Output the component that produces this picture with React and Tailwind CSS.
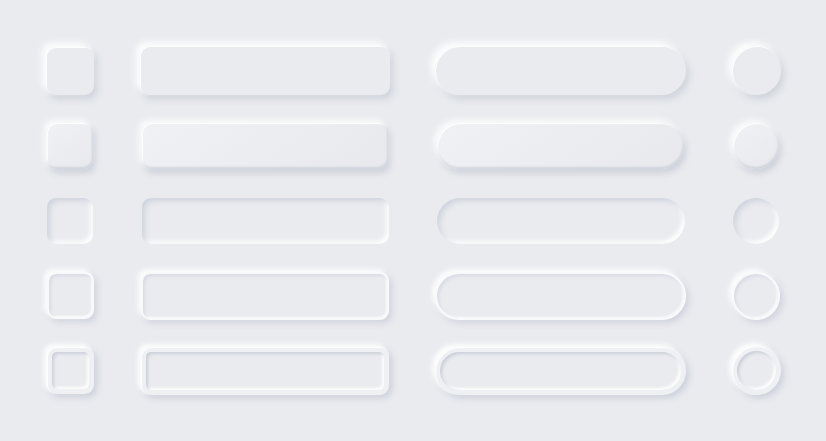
import React from "react";

// Neumorphic control set: each row repeats one surface treatment
// across a square, a bar, a pill and a circle.
const rows = [
  {
    size: "h-[49px]",
    square: "w-[48px] h-[48px]",
    bar: "w-[250px]",
    pill: "w-[251px]",
    circle: "w-[49px] h-[49px]",
    surface:
      "bg-[#e9ebef] shadow-[-4px_-4px_7px_rgba(255,255,255,0.95),3px_4px_7px_rgba(168,174,188,0.4),inset_1px_1px_0_rgba(255,255,255,0.9)]",
  },
  {
    size: "h-[46px]",
    square: "w-[46px] h-[46px]",
    bar: "w-[246px]",
    pill: "w-[247px]",
    circle: "w-[46px] h-[46px]",
    surface:
      "bg-[linear-gradient(145deg,#f0f1f4,#e7e9ed)] shadow-[-3px_-3px_6px_rgba(255,255,255,0.9),2px_4px_6px_rgba(160,166,182,0.4),inset_-1px_-2px_2px_rgba(190,195,206,0.55),inset_1px_1px_1px_rgba(255,255,255,1)]",
  },
  {
    size: "h-[46px]",
    square: "w-[46px] h-[46px]",
    bar: "w-[247px]",
    pill: "w-[248px]",
    circle: "w-[46px] h-[46px]",
    surface:
      "bg-[#e9ebef] shadow-[inset_3px_3px_5px_rgba(175,181,195,0.42),inset_-3px_-3px_4px_rgba(255,255,255,0.95)]",
  },
  {
    size: "h-[48px]",
    square: "w-[47px] h-[47px]",
    bar: "w-[248px]",
    pill: "w-[251px]",
    circle: "w-[48px] h-[48px]",
    surface:
      "bg-[#e9ebef] border-2 border-[#f8f9fb] shadow-[-3px_-3px_5px_rgba(255,255,255,0.9),3px_3px_6px_rgba(168,174,188,0.38),inset_2px_2px_3px_rgba(180,186,198,0.3),inset_-1px_-1px_2px_rgba(255,255,255,0.9)]",
  },
  {
    size: "h-[48px]",
    square: "w-[47px] h-[47px]",
    bar: "w-[248px]",
    pill: "w-[251px]",
    circle: "w-[49px] h-[49px]",
    ring: true,
    surface:
      "bg-[#eef0f3] p-[5px] shadow-[-3px_-3px_5px_rgba(255,255,255,0.95),3px_3px_6px_rgba(165,171,186,0.42),inset_1px_1px_1px_rgba(255,255,255,1)]",
    inner:
      "bg-[#e9ebef] shadow-[inset_2px_2px_3px_rgba(170,176,190,0.45),inset_-2px_-2px_3px_rgba(255,255,255,0.95)]",
  },
];

function Shape({ row, dims, radius, innerRadius }) {
  if (row.ring) {
    return (
      <div className={`${dims} ${radius} ${row.surface} flex`}>
        <div className={`flex-1 ${innerRadius} ${row.inner}`} />
      </div>
    );
  }
  return <div className={`${dims} ${radius} ${row.surface}`} />;
}

export default function App() {
  return (
    <div className="w-[826px] h-[441px] bg-[#e9ebef] overflow-hidden pl-[45px] pt-[33px]">
      <div className="grid grid-cols-[50px_250px_251px_50px] gap-x-[45px]">
        {rows.map((row, i) => (
          <React.Fragment key={i}>
            <div className="h-[75px] flex items-center justify-center">
              <Shape row={row} dims={row.square} radius="rounded-[9px]" innerRadius="rounded-[5px]" />
            </div>
            <div className="h-[75px] flex items-center justify-center">
              <Shape row={row} dims={`${row.bar} ${row.size}`} radius="rounded-[9px]" innerRadius="rounded-[5px]" />
            </div>
            <div className="h-[75px] flex items-center justify-center">
              <Shape row={row} dims={`${row.pill} ${row.size}`} radius="rounded-full" innerRadius="rounded-full" />
            </div>
            <div className="h-[75px] flex items-center justify-center">
              <Shape row={row} dims={row.circle} radius="rounded-full" innerRadius="rounded-full" />
            </div>
          </React.Fragment>
        ))}
      </div>
    </div>
  );
}
